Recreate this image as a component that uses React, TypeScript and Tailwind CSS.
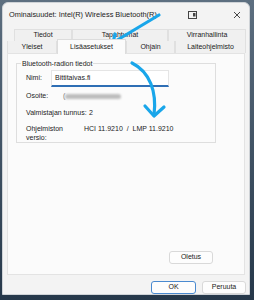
import React from 'react';

const tabsTop = [
  { label: 'Tiedot', w: 'w-[58px]' },
  { label: 'Tapahtumat', w: 'w-[96px]' },
  { label: 'Virranhallinta', w: 'w-[78px]' },
];

const tabsBottom = [
  { label: 'Yleiset', w: 'w-[50px]', active: false },
  { label: 'Lisäasetukset', w: 'w-[69px]', active: true },
  { label: 'Ohjain', w: 'w-[49px]', active: false },
  { label: 'Laiteohjelmisto', w: 'w-[71px]', active: false },
];

export default function App() {
  return (
    <div
      className="relative w-[254px] h-[300px] overflow-hidden bg-gradient-to-b from-[#5d6f80] to-[#26384a] pl-[2px] pt-[2px] text-[#1b1b1b]"
      style={{ fontFamily: '"Liberation Sans", Arial, sans-serif' }}
    >
      <div className="w-[248px] h-[293px] bg-[#f3f3f3] rounded-t-[6px] border border-[#cfd3d7] flex flex-col">
        {/* title bar */}
        <div className="h-[24px] flex items-center pl-[6px] pr-[6px] text-[7.4px]">
          <span className="flex-1">Ominaisuudet: Intel(R) Wireless Bluetooth(R)</span>
          <svg width="9" height="8" viewBox="0 0 9 8" className="mr-[36px]">
            <rect x="0.5" y="0.5" width="8" height="7" fill="none" stroke="#444" strokeWidth="1" />
            <rect x="5" y="2" width="2.5" height="3.5" fill="#444" />
          </svg>
          <svg width="8" height="8" viewBox="0 0 8 8" className="mr-[2px]">
            <path d="M1 1 L7 7 M7 1 L1 7" stroke="#333" strokeWidth="0.9" />
          </svg>
        </div>

        {/* tabs */}
        <div className="mt-[2px] text-[7px]">
          <div className="flex pl-[11px] h-[12px]">
            {tabsTop.map((t) => (
              <div
                key={t.label}
                className={`${t.w} flex items-center justify-center border-t border-l border-r border-[#e0e0e0] bg-[#f0f0f0]`}
              >
                {t.label}
              </div>
            ))}
          </div>
          <div className="flex pl-[4px] h-[12px]">
            {tabsBottom.map((t) =>
              t.active ? (
                <div
                  key={t.label}
                  className={`${t.w} flex items-center justify-center bg-[#fbfbfb] border-t border-l border-r border-[#dcdcdc] -mt-[2px] h-[15px] relative z-10`}
                >
                  {t.label}
                </div>
              ) : (
                <div
                  key={t.label}
                  className={`${t.w} flex items-center justify-center border-l border-r border-[#e0e0e0] bg-[#f0f0f0]`}
                >
                  {t.label}
                </div>
              )
            )}
          </div>
        </div>

        {/* tab panel */}
        <div className="mx-[4px] h-[222px] bg-[#fbfbfb] border border-[#e3e3e3] flex flex-col text-[7px]">
          <div className="relative mt-[9px] ml-[8px] w-[200px] h-[80px] border border-[#dedede]">
            <div className="absolute -top-[5px] left-[4px] bg-[#fbfbfb] px-[1px] leading-[9px]">
              Bluetooth-radion tiedot
            </div>
            <div className="pl-[9px] pt-[6px] flex flex-col">
              <div className="flex items-center h-[17px]">
                <div className="w-[25px]">Nimi:</div>
                <div className="w-[118px] h-[17px] bg-white border border-[#e5e5e5] border-b-2 border-b-[#2f6fb5] flex items-center pl-[3px]">
                  Bittitaivas.fi
                </div>
              </div>
              <div className="flex items-center h-[18px]">
                <div className="w-[37px]">Osoite:</div>
                <div className="flex items-center text-[#777]">
                  <span>(</span>
                  <span className="block w-[56px] h-[5px] rounded-full bg-[#bdbdbd] blur-[1px]" />
                </div>
              </div>
              <div className="flex items-center h-[17px]">
                <div className="w-[63px] whitespace-nowrap">Valmistajan tunnus:</div>
                <div>2</div>
              </div>
              <div className="flex items-start mt-[2px]">
                <div className="w-[58px] shrink-0 leading-[9px]">
                  Ohjelmiston
                  <br />
                  versio:
                </div>
                <div className="leading-[9px] whitespace-pre">HCI 11.9210  /  LMP 11.9210</div>
              </div>
            </div>
          </div>
          <div className="flex-1" />
          <div className="flex justify-end pr-[31px] pb-[10px]">
            <div className="w-[44px] h-[13px] bg-[#fdfdfd] border border-[#d9d9d9] rounded-[3px] flex items-center justify-center">
              Oletus
            </div>
          </div>
        </div>

        {/* bottom buttons */}
        <div className="flex justify-end gap-[6px] pr-[3px] mt-[6px] text-[7px]">
          <div className="w-[45px] h-[13px] bg-[#fdfdfd] border border-[#4a8ad0] rounded-[3px] flex items-center justify-center">
            OK
          </div>
          <div className="w-[44px] h-[13px] bg-[#fdfdfd] border border-[#d9d9d9] rounded-[3px] flex items-center justify-center">
            Peruuta
          </div>
        </div>
      </div>

      {/* annotation arrows */}
      <svg className="absolute left-0 top-0 pointer-events-none" width="254" height="300" viewBox="0 0 254 300">
        <g fill="none" stroke="#19a6ea" strokeWidth="3.2" strokeLinecap="round" strokeLinejoin="round">
          <path d="M159 15 L114 42" />
          <path d="M115 34 L113 43 L122 44" />
          <path d="M132 63 C 150 72, 157 92, 154 115" />
          <path d="M145 106 L154 116 L164 107" />
        </g>
      </svg>
    </div>
  );
}
